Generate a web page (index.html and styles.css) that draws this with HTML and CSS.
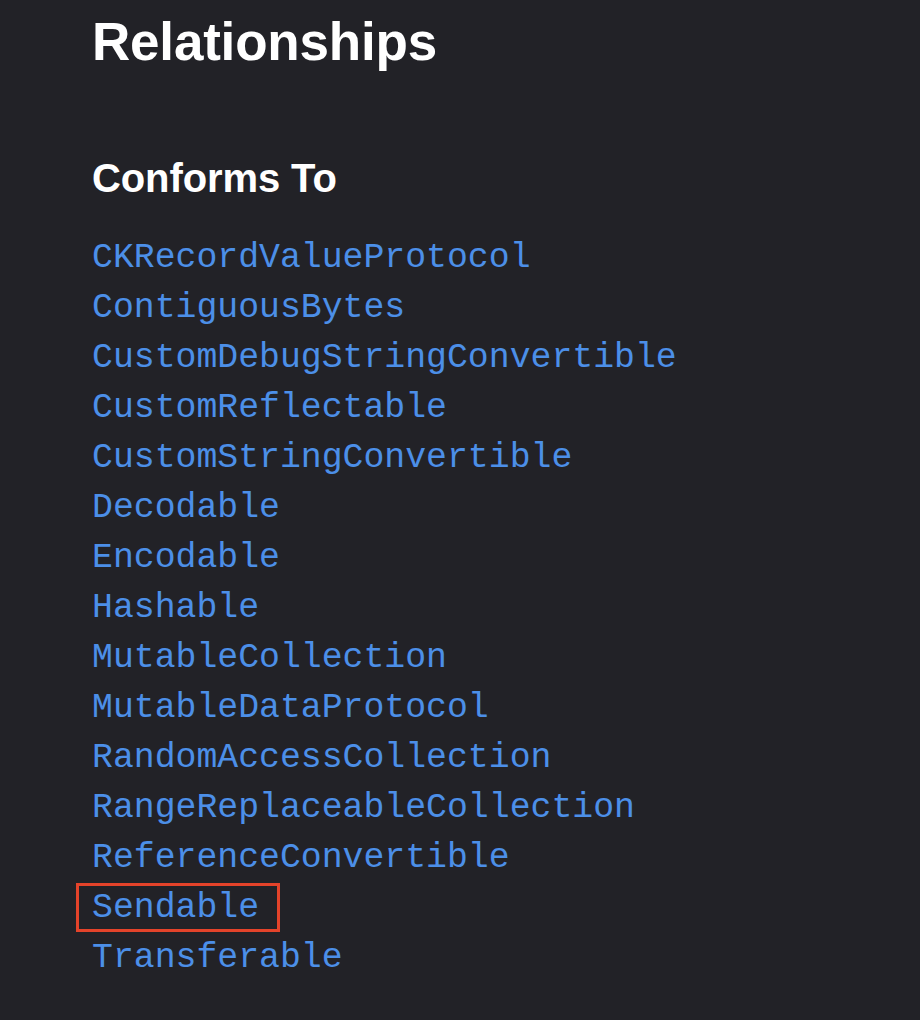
FILE: index.html
```html
<!DOCTYPE html>
<html lang="en">
<head>
<meta charset="utf-8">
<title>Relationships</title>
<link rel="stylesheet" href="styles.css">
</head>
<body>
<main class="page">
  <h1 class="title">Relationships</h1>
  <section class="group">
    <h2 class="group-title">Conforms To</h2>
    <ul class="links">
      <li><a class="link" href="#">CKRecordValueProtocol</a></li>
      <li><a class="link" href="#">ContiguousBytes</a></li>
      <li><a class="link" href="#">CustomDebugStringConvertible</a></li>
      <li><a class="link" href="#">CustomReflectable</a></li>
      <li><a class="link" href="#">CustomStringConvertible</a></li>
      <li><a class="link" href="#">Decodable</a></li>
      <li><a class="link" href="#">Encodable</a></li>
      <li><a class="link" href="#">Hashable</a></li>
      <li><a class="link" href="#">MutableCollection</a></li>
      <li><a class="link" href="#">MutableDataProtocol</a></li>
      <li><a class="link" href="#">RandomAccessCollection</a></li>
      <li><a class="link" href="#">RangeReplaceableCollection</a></li>
      <li><a class="link" href="#">ReferenceConvertible</a></li>
      <li><a class="link boxed" href="#">Sendable</a></li>
      <li><a class="link" href="#">Transferable</a></li>
    </ul>
  </section>
</main>
</body>
</html>
```
FILE: styles.css
```css
html, body {
  margin: 0;
  padding: 0;
  background: #222227;
}

body {
  font-family: "Liberation Sans", Arial, sans-serif;
  color: #ffffff;
}

.page {
  padding: 0 0 0 92px;
}

.title {
  margin: 0;
  padding-top: 8px;
  font-size: 53px;
  line-height: 68px;
  font-weight: 700;
  letter-spacing: -0.2px;
}

.group {
  margin-top: 78px;
}

.group-title {
  margin: 0;
  font-size: 40px;
  line-height: 48px;
  font-weight: 700;
  letter-spacing: -0.1px;
}

.links {
  list-style: none;
  margin: 31px 0 0 0;
  padding: 0;
}

.links li {
  height: 50px;
  line-height: 50px;
}

.link {
  font-family: "Liberation Mono", "DejaVu Sans Mono", monospace;
  font-size: 34.8px;
  color: #4c8fe8;
  text-decoration: none;
}

.boxed {
  display: inline-block;
  margin: 0 -21px 0 -16px;
  padding: 0 18px 0 13px;
  line-height: 43px;
  border: 3px solid #e4432a;
}
```
